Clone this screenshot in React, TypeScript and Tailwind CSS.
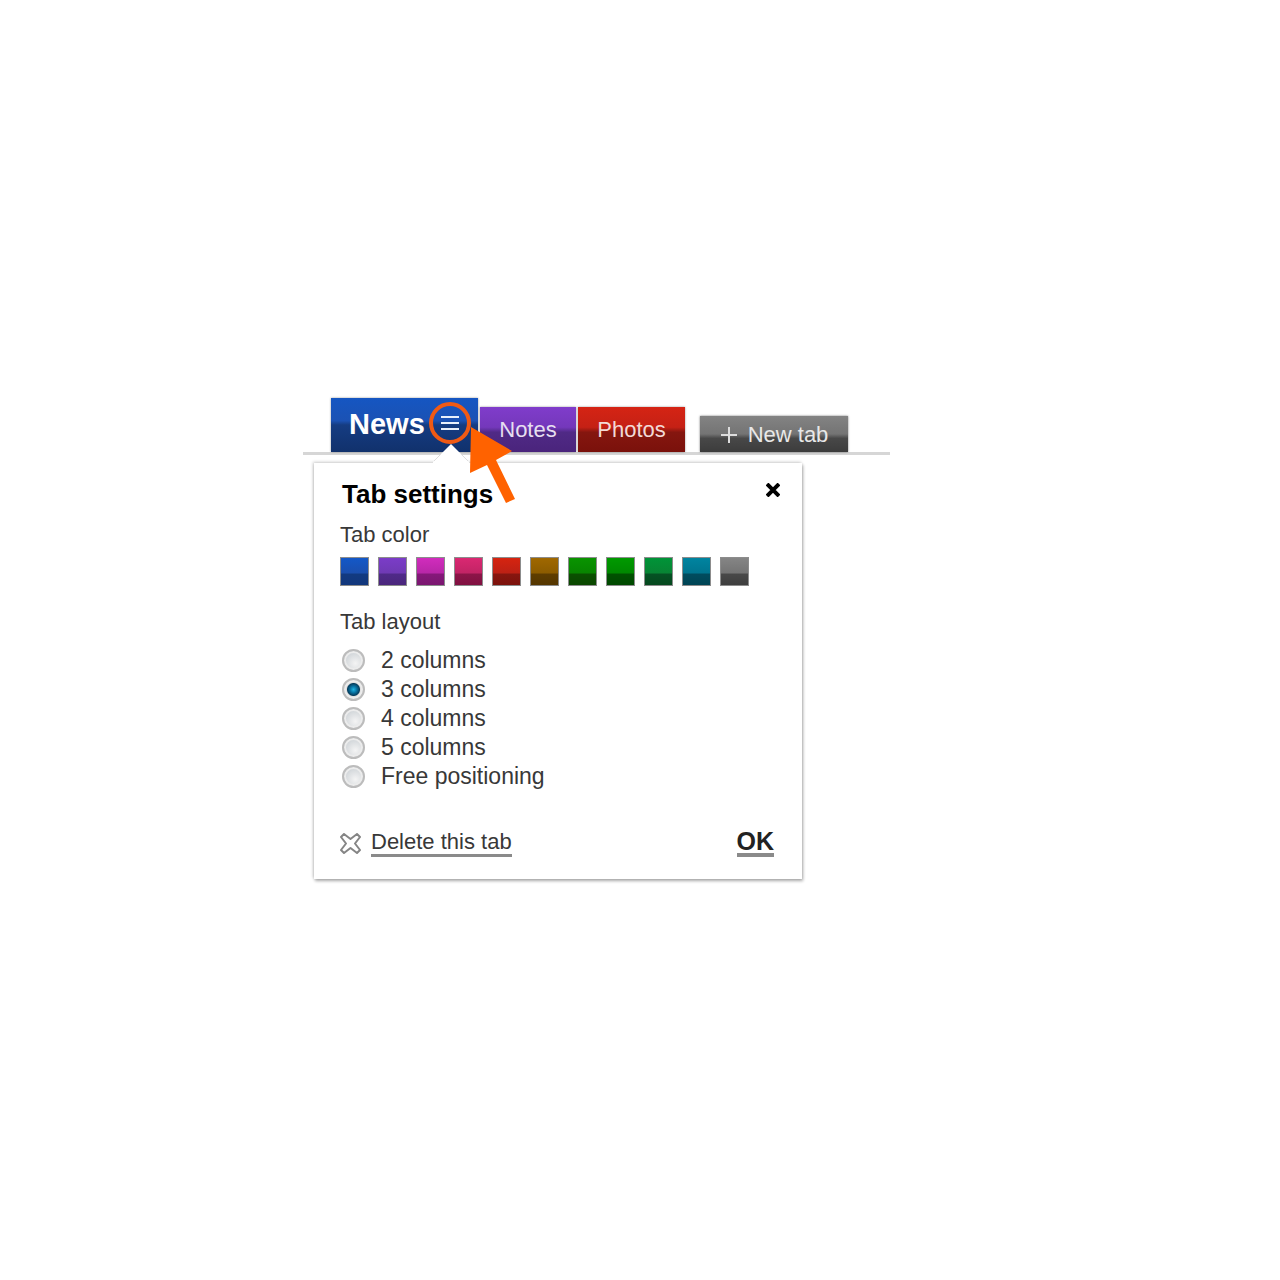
import { useState } from "react";

const swatches = [
  { name: "Blue", fill: "bg-[linear-gradient(#1358c8,#1b4fae_55%,#123a80_60%,#12377c)]" },
  { name: "Purple", fill: "bg-[linear-gradient(#7b3cc8,#6f3ab4_55%,#4f2a88_60%,#4a267c)]" },
  { name: "Magenta", fill: "bg-[linear-gradient(#d12cbd,#b827a8_55%,#85187a_60%,#7a1670)]" },
  { name: "Pink", fill: "bg-[linear-gradient(#da2872,#c22465_55%,#8c1548_60%,#801040)]" },
  { name: "Red", fill: "bg-[linear-gradient(#d62410,#bd2115_55%,#87160f_60%,#7c120c)]" },
  { name: "Brown", fill: "bg-[linear-gradient(#a06800,#8c5c00_55%,#5e3d00_60%,#543600)]" },
  { name: "Forest", fill: "bg-[linear-gradient(#099400,#088400_55%,#0a5000_60%,#0a4600)]" },
  { name: "Green", fill: "bg-[linear-gradient(#009a00,#008800_55%,#005200_60%,#004800)]" },
  { name: "Emerald", fill: "bg-[linear-gradient(#009438,#088434_55%,#055224_60%,#05481e)]" },
  { name: "Teal", fill: "bg-[linear-gradient(#0084a0,#00758f_55%,#004c5e_60%,#004454)]" },
  { name: "Gray", fill: "bg-[linear-gradient(#858585,#747474_55%,#484848_60%,#3e3e3e)]" },
];

const layouts = ["2 columns", "3 columns", "4 columns", "5 columns", "Free positioning"];

function Tabs() {
  return (
    <nav className="flex items-end border-b-3 border-[#d6d6d6] pl-7">
      <div className="relative flex h-[54px] w-[147px] items-center bg-[linear-gradient(#1556c2,#1b52b4_42%,#153c82_50%,#11316c)] pb-0.5 pl-[18px] shadow-[0_0_2px_#0006]">
        <button className="text-[29px] leading-8 font-bold text-white">News</button>
        <button
          aria-label="Tab menu"
          className="absolute top-1 left-[98px] flex size-[42px] items-center justify-center rounded-full border-4 border-[#f05a14]"
        >
          <svg viewBox="0 0 18 14" className="h-3.5 w-[18px]" stroke="#e9f0fc" strokeWidth="2">
            <path d="M0 1H18M0 7H18M0 13H18" />
          </svg>
        </button>
        <svg viewBox="0 0 36 19" className="absolute top-[46px] left-[102px] z-10 h-[19px] w-9">
          <path d="M0 18L18 0L36 18V19H0Z" fill="white" />
          <path d="M1 17L8 10M28 10L35 17" stroke="#dddddd" />
        </svg>
        <svg viewBox="0 0 48 78" className="pointer-events-none absolute top-[28px] left-[138px] z-20 h-[78px] w-12">
          <path d="M2 1L43 25L27 34L46 73L37 77L18 39L1 47Z" fill="#ff6200" />
        </svg>
      </div>
      <button className="ml-0.5 h-[45px] w-24 bg-[linear-gradient(#803ccb,#7438bb_45%,#502a86_56%,#4a247c)] text-[22px] leading-6 text-[#e6dff0] shadow-[0_0_2px_#0006]">
        Notes
      </button>
      <button className="ml-0.5 h-[45px] w-[107px] bg-[linear-gradient(#d52414,#c52115_45%,#85160f_56%,#7a110b)] text-[22px] leading-6 text-[#f2d9d6] shadow-[0_0_2px_#0006]">
        Photos
      </button>
      <button className="ml-[15px] flex h-9 w-[148px] items-center justify-center gap-2.5 bg-[linear-gradient(#838383,#747474_50%,#484848_62%,#3c3c3c)] pt-0.5 text-[22px] leading-6 text-[#e8e8e8] shadow-[0_0_2px_#0008]">
        <svg viewBox="0 0 18 18" className="size-[18px]" stroke="#dddddd" strokeWidth="2">
          <path d="M1 9H17M9 1V17" />
        </svg>
        New tab
      </button>
    </nav>
  );
}

export default function App() {
  const [layout, setLayout] = useState("3 columns");
  const [color, setColor] = useState("Blue");

  return (
    <main className="min-h-screen bg-white pt-[398px] pl-[303px] font-['Liberation_Sans',Arial,sans-serif] text-[#383838]">
      <div className="max-w-[587px]">
        <Tabs />
        <section className="mt-2 ml-[11px] max-w-[488px] bg-white px-[26px] pt-4 pb-[22px] shadow-[1px_2px_3px_#0005,-1px_-1px_3px_#0003]">
          <header className="flex items-start justify-between">
            <h1 className="pl-0.5 text-[26px] leading-[31px] font-bold text-black">Tab settings</h1>
            <button aria-label="Close" className="-mr-2 p-1">
              <svg viewBox="0 0 14 14" className="size-3.5" stroke="black" strokeWidth="4">
                <path d="M1 1L13 13M13 1L1 13" />
              </svg>
            </button>
          </header>

          <h2 className="mt-[13px] text-[22px] leading-6">Tab color</h2>
          <div className="mt-2.5 flex gap-[9px]">
            {swatches.map((s) => (
              <button
                key={s.name}
                aria-label={s.name}
                aria-pressed={color === s.name}
                onClick={() => setColor(s.name)}
                className={`size-[29px] border border-[#8c8c8c] ${s.fill}`}
              />
            ))}
          </div>

          <fieldset className="mt-6">
            <legend className="text-[22px] leading-6">Tab layout</legend>
            <div className="mt-3">
              {layouts.map((name) => (
                <label key={name} className="flex h-[29px] items-center gap-4 pb-px pl-0.5 text-[23px] leading-7">
                  <input
                    type="radio"
                    name="layout"
                    checked={layout === name}
                    onChange={() => setLayout(name)}
                    className="size-[23px] shrink-0 appearance-none rounded-full border-2 border-[#bcbcbc] bg-[radial-gradient(circle_at_60%_65%,#f4f4f4,#cdd2d6_75%)] shadow-[inset_0_0_0_2px_#ececec] checked:bg-[radial-gradient(circle_at_50%_50%,#20b4e0_0px,#0878a8_3px,#063e5e_6px,#dedede_7px)]"
                  />
                  {name}
                </label>
              ))}
            </div>
          </fieldset>

          <footer className="mt-[38px] flex items-center justify-between">
            <div className="flex items-center gap-2.5">
              <svg viewBox="0 0 21 21" className="size-[21px]" fill="white" stroke="#858585" strokeWidth="2" strokeLinejoin="round">
                <path d="M1 4L4 1L10.500 6L17 1L20 4L15 10.500L20 17L17 20L10.500 15L4 20L1 17L6 10.500Z" />
              </svg>
              <a href="#delete" className="border-b-3 border-[#8a8a8a] text-[22px] leading-6">
                Delete this tab
              </a>
            </div>
            <button className="mr-0.5 border-b-4 border-[#8a8a8a] text-[25px] leading-6 font-bold text-[#222222]">OK</button>
          </footer>
        </section>
      </div>
    </main>
  );
}
